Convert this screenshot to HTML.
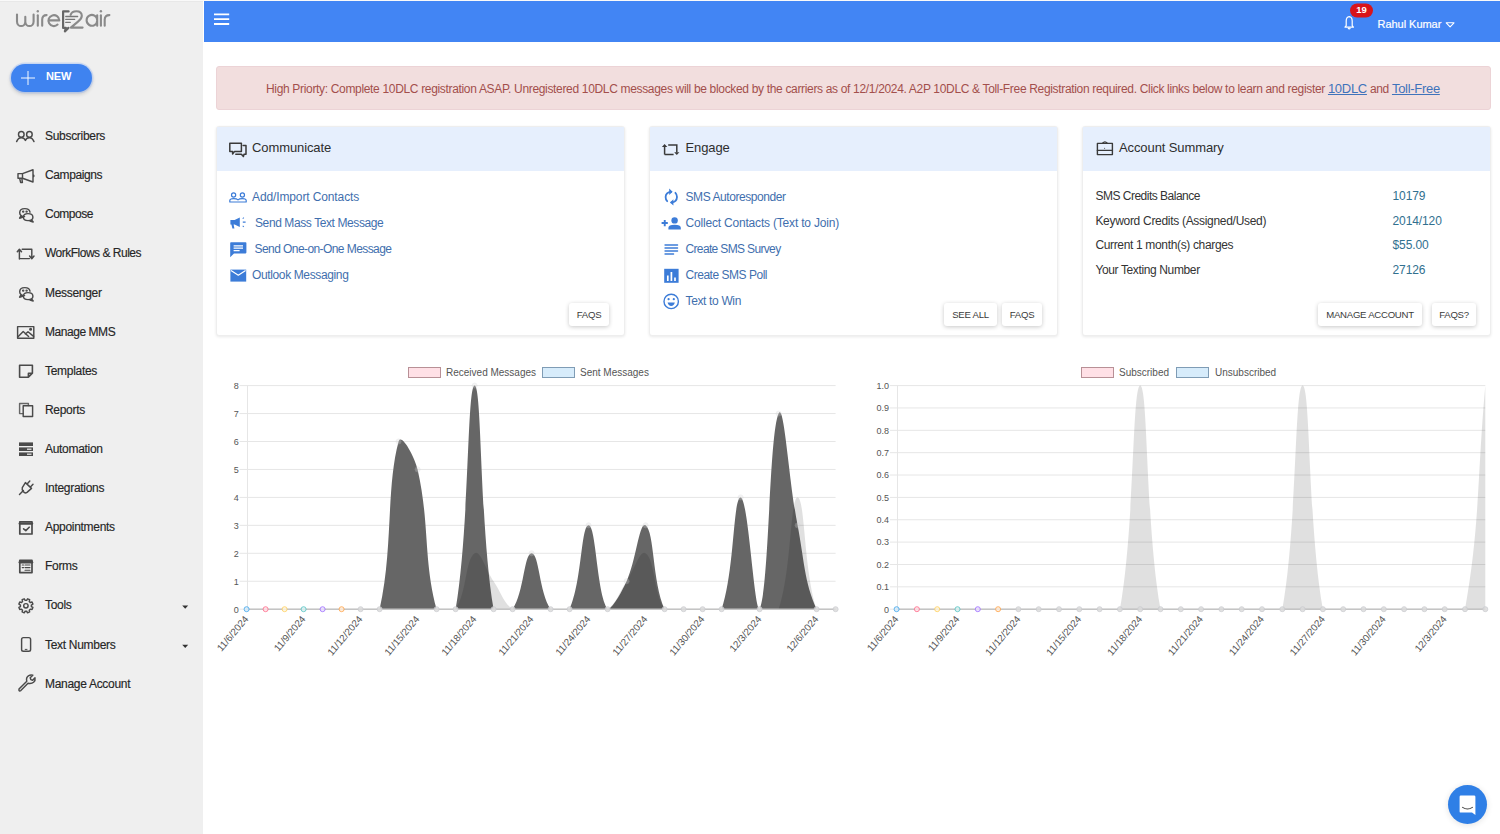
<!DOCTYPE html>
<html><head><meta charset="utf-8">
<style>
*{box-sizing:border-box;margin:0;padding:0}
html,body{width:1500px;height:834px;overflow:hidden;background:#fff;font-family:"Liberation Sans",sans-serif;position:relative}
.abs{position:absolute}
#side{left:0;top:0;width:203px;height:834px;background:#efefef}
#hdr{left:204px;top:1px;width:1296px;height:41px;background:#4285f4}
.nav{position:absolute;left:45px;font-size:12px;color:#262626;-webkit-text-stroke:0.15px #262626;letter-spacing:-0.3px;line-height:14px;white-space:nowrap}
.ico{position:absolute;overflow:visible}
#newbtn{left:11px;top:64px;width:81px;height:28px;border-radius:14px;background:#3f83f0;box-shadow:0 0 0 1.5px rgba(140,180,255,.35),0 2px 4px rgba(0,0,0,.18)}
#newbtn span{position:absolute;left:35px;top:5px;font-size:11px;font-weight:bold;color:#fff;line-height:14px;letter-spacing:-0.2px}
#alert{left:216px;top:66px;width:1275px;height:44px;background:#f2dede;border:1px solid #ecd3d6;border-radius:3px}
#alert .t{position:absolute;left:49px;top:15px;font-size:12px;color:#a34f4c;line-height:14px;white-space:nowrap;letter-spacing:-0.33px}
#alert a{color:#3f73bb;text-decoration:underline;font-size:13px;letter-spacing:-0.3px}
.card{position:absolute;top:126px;height:210px;background:#fff;border:1px solid #eeeeee;border-radius:3px;box-shadow:0 1px 3px rgba(0,0,0,.09)}
.chd{position:absolute;left:0;top:0;right:0;height:44px;background:#e6effd}
.ctitle{position:absolute;top:14px;font-size:13px;color:#2e2e2e;line-height:16px;white-space:nowrap;letter-spacing:-0.1px}
.lnk{position:absolute;font-size:12px;color:#3f6fae;line-height:14px;white-space:nowrap;letter-spacing:-0.12px}
.row{position:absolute;font-size:12px;color:#333;line-height:14px;white-space:nowrap;letter-spacing:-0.2px}
.val{position:absolute;font-size:12px;color:#31708f;line-height:14px;white-space:nowrap;letter-spacing:-0.1px}
.btn{position:absolute;height:23px;top:176px;background:#fff;border-radius:3px;box-shadow:0 1px 4px rgba(0,0,0,.22);font-size:9.6px;color:#3a3a3a;text-align:center;line-height:23px;white-space:nowrap;letter-spacing:-0.25px}
.leg{position:absolute;font-size:10px;color:#555;line-height:12px;white-space:nowrap}
.lbox{position:absolute;width:33px;height:11px;border:1px solid}
</style></head><body>
<div id="side" class="abs"></div>
<svg class="abs" style="left:0;top:0" width="203" height="40" viewBox="0 0 203 40" fill="none" stroke-linecap="round" stroke-linejoin="round">
<g stroke="#8a8a8a" stroke-width="2.1">
<path d="M17,14.6 V21.4 A4.1,4.6 0 0 0 25.3,21.4 V16.8 M25.3,21.4 A4.1,4.6 0 0 0 33.6,21.4 V14.6"/>
<path d="M37.8,15.2 V25.8"/>
<path d="M42.2,25.8 V19.6 Q42.2,15.1 46.6,15.1"/>
<path d="M48.6,20.4 H59.3 A5.45,5.45 0 1 0 57.6,24.6"/>
<path d="M70.6,14.8 Q71.8,11.2 76.4,11.2 Q81.8,11.2 81.8,15.8 Q81.8,18.8 78,21.6 L70.8,27.6 H82.6"/>
<path d="M97.2,20.4 A5.3,5.4 0 1 1 97.2,20.3 M97.2,15.2 V25.8"/>
<path d="M100.9,15.2 V25.8"/>
<path d="M104.7,25.8 V19.6 Q104.7,15.1 109.4,15.1"/>
</g>
<g fill="#8e8e8e"><circle cx="37.8" cy="11.3" r="1.2"/><circle cx="100.9" cy="11.3" r="1.2"/></g>
<path d="M68.6,11.4 H63.1 V27.9 H65.9 L64.9,31.4 L68.4,27.9" stroke="#666" stroke-width="2.2"/>
<path d="M65.8,16.5 H77.6 M65.8,19.4 H74.6 M65.8,22.4 H70.2" stroke="#777" stroke-width="1.4"/>
</svg>
<div id="newbtn" class="abs"><svg class="abs" style="left:10px;top:7px" width="14" height="14" viewBox="0 0 14 14"><path d="M7,0 V14 M0,7 H14" stroke="#fff" stroke-width="0.95"/></svg><span>NEW</span></div>
<svg class="abs" style="left:0;top:0" width="203" height="720" viewBox="0 0 203 720" fill="none" stroke="#4a4a4a" stroke-width="1.45" stroke-linecap="round" stroke-linejoin="round">
<!-- Subscribers -->
<circle cx="21.3" cy="134.4" r="2.8"/><circle cx="29.4" cy="134.4" r="2.8"/>
<path d="M16.6,141.6 Q18.2,137.8 21.3,137.8 Q24.2,137.8 25.4,140.4 Q26.5,137.8 29.4,137.8 Q32.4,137.8 34,141.6"/>
<!-- Campaigns megaphone -->
<path d="M18,173.6 H22.5 L33,169.8 V182 L22.5,178.2 H18 Z M22.5,173.6 V178.2 M19.6,178.2 L20.6,182.4 H22.4 L21.8,178.2 M33.2,174.8 Q34.6,175.9 33.2,177"/>
<!-- Compose -->
<path d="M24.6,216.6 Q19.9,216.6 19.7,212.8 Q19.7,208.6 24.8,208.6 Q29.6,208.6 30,212.2 M21,215.8 L19.6,218.2 L23.2,217"/>
<path d="M28,213.6 Q32.9,213.6 32.9,217.2 Q32.9,220.6 28,220.6 Q23.4,220.6 23.4,217.2 Q23.4,213.6 28,213.6 M31.6,220 L33.2,222 L30,221"/>
<circle cx="23.2" cy="211.6" r="0.5" fill="#4a4a4a"/><circle cx="26.6" cy="211.6" r="0.5" fill="#4a4a4a"/>
<!-- WorkFlows -->
<path d="M19.4,259 V249.8 M17.3,251.8 L19.4,249.2 L21.5,251.8 M19.4,258.6 H29.4 M22.2,249.3 H31.8 V258.2 M29.6,256 L31.8,258.8 L34,256"/>
<!-- Messenger -->
<path d="M24.6,295.6 Q19.9,295.6 19.7,291.8 Q19.7,287.6 24.8,287.6 Q29.6,287.6 30,291.2 M21,294.8 L19.6,297.2 L23.2,296"/>
<path d="M28,292.6 Q32.9,292.6 32.9,296.2 Q32.9,299.6 28,299.6 Q23.4,299.6 23.4,296.2 Q23.4,292.6 28,292.6 M31.6,299 L33.2,301 L30,300"/>
<circle cx="23.2" cy="290.6" r="0.5" fill="#4a4a4a"/><circle cx="26.6" cy="290.6" r="0.5" fill="#4a4a4a"/>
<!-- Manage MMS -->
<rect x="17.6" y="326.6" width="16.2" height="11.6"/>
<path d="M18,336.8 L23.2,331.4 L28.6,336.6 M25.4,334 L28,331.8 L33.6,336.4"/><circle cx="30.6" cy="329.2" r="0.8" fill="#4a4a4a"/>
<!-- Templates -->
<path d="M19.6,365.2 H32.4 V373.2 L28.4,377.2 H19.6 Z M28.4,377.2 V373.4 H32.2" stroke-width="1.6"/>
<!-- Reports -->
<path d="M23.2,413.6 H19.6 V403.4 H28.4 V405.6" stroke="#666"/>
<rect x="23.2" y="405.8" width="9.4" height="10.6"/>
<!-- Automation -->
<g fill="#4a4a4a" stroke="none"><rect x="19" y="442.4" width="14" height="3.6"/><rect x="19" y="447.4" width="14" height="3.6"/><rect x="19" y="452.4" width="14" height="3.6"/></g>
<g fill="#efefef" stroke="none"><rect x="27" y="448.6" width="4.5" height="1.2"/><rect x="27" y="453.6" width="4.5" height="1.2"/></g>
<!-- Integrations plug -->
<path d="M19.5,494.4 L23.4,490.6 M22.3,487.6 L25.4,482.6 L31.5,488.4 L27,492.4 Q25,493.6 23.4,491.8 Q21.6,489.8 22.3,487.6 Z M27.1,484 L29.8,481.1 M30.4,486.9 L33,484.2"/>
<!-- Appointments -->
<rect x="19.8" y="521.8" width="12.2" height="12.2" stroke-width="1.7"/>
<path d="M19.8,523.6 H32" stroke-width="2.4"/>
<path d="M23.6,528.8 L25.8,530.6 L29.2,527.2" stroke-width="1.6"/>
<!-- Forms -->
<rect x="19.8" y="560.4" width="12.2" height="12.2" stroke-width="1.7"/>
<path d="M19.8,562.2 H32" stroke-width="2.4"/>
<path d="M22.2,565 H23.6 M25,565 H30 M22.2,567.6 H23.6 M25,567.6 H30 M25,570.2 H30" stroke-width="1.1"/>
<!-- Tools gear -->
<path d="M31.35,606.52 L32.90,607.48 L32.04,609.56 L30.26,609.15 L29.25,610.16 L29.66,611.94 L27.58,612.80 L26.62,611.25 L25.18,611.25 L24.22,612.80 L22.14,611.94 L22.55,610.16 L21.54,609.15 L19.76,609.56 L18.90,607.48 L20.45,606.52 L20.45,605.08 L18.90,604.12 L19.76,602.04 L21.54,602.45 L22.55,601.44 L22.14,599.66 L24.22,598.80 L25.18,600.35 L26.62,600.35 L27.58,598.80 L29.66,599.66 L29.25,601.44 L30.26,602.45 L32.04,602.04 L32.90,604.12 L31.35,605.08 Z"/>
<circle cx="25.9" cy="605.8" r="2.2"/>
<!-- Text Numbers phone -->
<rect x="21.6" y="637.6" width="9" height="13.6" rx="1.8"/>
<path d="M25.2,649.4 H27" stroke-width="1"/>
<!-- Manage Account wrench -->
<path d="M19,689 L26.8,681.2 Q25.8,677.6 28.4,675.8 Q30.6,674.4 32.8,675.2 L30.2,677.8 L30.8,679.6 L32.6,680.2 L35,677.8 Q35.6,680.4 33.6,682.2 Q31.4,684 28,683.2 L20.8,690.6 Q19.6,691.4 19,690.4 Z"/>
<!-- carets -->
<path d="M182.2,605.6 H188.2 L185.2,608.8 Z M182.2,644.8 H188.2 L185.2,648 Z" fill="#333" stroke="none"/>
</svg>
<div class="nav" style="top:129px">Subscribers</div>
<div class="nav" style="top:168px;letter-spacing:-0.4px">Campaigns</div>
<div class="nav" style="top:207px;letter-spacing:-0.5px">Compose</div>
<div class="nav" style="top:246px;letter-spacing:-0.5px">WorkFlows &amp; Rules</div>
<div class="nav" style="top:286px">Messenger</div>
<div class="nav" style="top:325px;letter-spacing:-0.45px">Manage MMS</div>
<div class="nav" style="top:364px">Templates</div>
<div class="nav" style="top:403px">Reports</div>
<div class="nav" style="top:442px">Automation</div>
<div class="nav" style="top:481px">Integrations</div>
<div class="nav" style="top:520px">Appointments</div>
<div class="nav" style="top:559px">Forms</div>
<div class="nav" style="top:598px">Tools</div>
<div class="nav" style="top:638px">Text Numbers</div>
<div class="nav" style="top:677px">Manage Account</div>
<div id="hdr" class="abs"></div>
<div class="abs" style="left:0;top:0;width:1500px;height:1px;background:#f9f9f9"></div><div class="abs" style="left:0;top:1px;width:203px;height:1px;background:#e8e8e8"></div>
<svg class="abs" style="left:204px;top:0" width="1296" height="42" viewBox="204 0 1296 42">
<path d="M214,14.4 H229.2 M214,19.2 H229.2 M214,24 H229.2" stroke="#fff" stroke-width="1.8"/>
<path d="M1345,27.2 H1353.4 L1352.2,25.6 V21 Q1352.2,17 1349.2,16.6 Q1346.2,17 1346.2,21 V25.6 Z M1348,28.2 Q1349.2,29.6 1350.4,28.2" fill="none" stroke="#fff" stroke-width="1.2" stroke-linejoin="round"/>
<rect x="1350" y="3.4" width="23" height="14.2" rx="7.1" fill="#d8141b"/>
<text x="1361.5" y="13.4" text-anchor="middle" font-family="Liberation Sans" font-weight="bold" font-size="9.5" fill="#fff">19</text>
<text x="1377.6" y="28" font-family="Liberation Sans" font-size="11" fill="#fff" stroke="#fff" stroke-width="0.2" letter-spacing="-0.05">Rahul Kumar</text>
<path d="M1446.2,22.8 H1454 L1450.1,26.8 Z" fill="none" stroke="#fff" stroke-width="1.1" stroke-linejoin="round"/>
</svg>
<div id="alert" class="abs"><div class="t">High Priorty: Complete 10DLC registration ASAP. Unregistered 10DLC messages will be blocked by the carriers as of 12/1/2024. A2P 10DLC &amp; Toll-Free Registration required. Click links below to learn and register <a>10DLC</a> and <a>Toll-Free</a></div></div>
<div class="card" style="left:216px;width:409px"><div class="chd"></div></div>
<div class="card" style="left:649px;width:409px"><div class="chd"></div></div>
<div class="card" style="left:1082px;width:409px"><div class="chd"></div></div>
<div class="ctitle" style="left:252px;top:140px">Communicate</div>
<div class="ctitle" style="left:685.5px;top:140px">Engage</div>
<div class="ctitle" style="left:1119px;top:140px">Account Summary</div>
<div class="lnk" style="left:252px;top:190px">Add/Import Contacts</div>
<div class="lnk" style="left:255px;top:216px;letter-spacing:-0.4px">Send Mass Text Message</div>
<div class="lnk" style="left:254.6px;top:242px;letter-spacing:-0.58px">Send One-on-One Message</div>
<div class="lnk" style="left:252px;top:268px;letter-spacing:-0.37px">Outlook Messaging</div>
<div class="lnk" style="left:685.5px;top:190px;letter-spacing:-0.43px">SMS Autoresponder</div>
<div class="lnk" style="left:685.5px;top:216px;letter-spacing:-0.19px">Collect Contacts (Text to Join)</div>
<div class="lnk" style="left:685.5px;top:242px;letter-spacing:-0.65px">Create SMS Survey</div>
<div class="lnk" style="left:685.5px;top:268px;letter-spacing:-0.48px">Create SMS Poll</div>
<div class="lnk" style="left:685.5px;top:294px;letter-spacing:-0.35px">Text to Win</div>
<div class="row" style="left:1095.4px;top:189px;letter-spacing:-0.5px">SMS Credits Balance</div>
<div class="row" style="left:1095.4px;top:213.5px;letter-spacing:-0.3px">Keyword Credits (Assigned/Used)</div>
<div class="row" style="left:1095.4px;top:238px;letter-spacing:-0.34px">Current 1 month(s) charges</div>
<div class="row" style="left:1095.4px;top:262.5px;letter-spacing:-0.37px">Your Texting Number</div>
<div class="val" style="left:1392.5px;top:189px">10179</div>
<div class="val" style="left:1392.5px;top:213.5px">2014/120</div>
<div class="val" style="left:1392.5px;top:238px">$55.00</div>
<div class="val" style="left:1392.5px;top:262.5px">27126</div>
<div class="btn" style="left:569px;top:303px;width:40px">FAQS</div>
<div class="btn" style="left:944px;top:303px;width:53px">SEE ALL</div>
<div class="btn" style="left:1002px;top:303px;width:40px">FAQS</div>
<div class="btn" style="left:1318px;top:303px;width:104px">MANAGE ACCOUNT</div>
<div class="btn" style="left:1432px;top:303px;width:44px">FAQS?</div>
<svg class="abs" style="left:0;top:0" width="1500" height="340" viewBox="0 0 1500 340" fill="none" stroke-linecap="round" stroke-linejoin="round">
<g stroke="#3a3a3a" stroke-width="1.3">
<!-- forum outline -->
<path d="M229.8,143.2 H241.4 V151.4 H234.6 L232.6,154 V151.4 H229.8 Z M243.2,145.4 H246 V154.2 H244 L243.4,156.6 L241.4,154.2 H235.8" stroke-width="1.5"/>
<!-- engage icon -->
<path d="M664.6,154.4 V146.6 M664.6,154.4 H673.6 M668.2,145 H676.8 V152.6" stroke-width="1.5" stroke-linecap="butt" stroke-linejoin="miter"/><path d="M661.9,146.9 L664.6,143.9 L667.3,146.9 Z M674.2,152.3 L676.8,155 L679.4,152.3 Z" fill="#3a3a3a" stroke="none"/>
<!-- briefcase -->
<rect x="1097.4" y="143.4" width="15" height="11.2" stroke-width="1.4"/>
<path d="M1102.6,143.2 Q1104.9,140.6 1107.2,143.2 M1097.4,150.4 H1112.4" stroke-width="1.4"/><circle cx="1104.6" cy="148.2" r="0.5" fill="#3a3a3a" stroke="none"/>
</g>
<g fill="#3c7cd8" stroke="none">
<!-- megaphone filled -->
<path d="M230.4,220 H234.6 L239.8,217.4 V227 L234.6,224.4 H233.6 L234.4,228.4 H232.4 L231.4,224.4 H230.4 Z"/>
<path d="M242.4,218.2 L243.6,217.2 L244.2,218 L243,219 Z M242.8,221.6 H245.6 V222.8 H242.8 Z M242.4,226.2 L243,225.4 L244.2,226.4 L243.6,227.2 Z"/>
<!-- chat filled -->
<path d="M231,242.2 H245.6 Q246.4,242.2 246.4,243 V252.6 Q246.4,253.4 245.6,253.4 H234 L230.2,257.2 V243 Q230.2,242.2 231,242.2 Z"/>
<!-- mail -->
<path d="M230.4,269.6 H246.2 V281.6 H230.4 Z"/>
<!-- person add -->
<circle cx="674.6" cy="220.4" r="3.2"/>
<path d="M668.4,229.4 V227.8 Q668.4,224.8 674.6,224.8 Q680.8,224.8 680.8,227.8 V229.4 Z"/>
<path d="M661.6,222.1 H667.8 V224 H661.6 Z M663.8,219.9 H665.7 V226.2 H663.8 Z"/>
<!-- poll -->
<rect x="664.2" y="268.8" width="14.4" height="14"/>
</g>
<g stroke="#fff" stroke-width="1.2" stroke-linecap="butt">
<path d="M233.6,245.8 H243 M233.6,248.2 H243 M233.6,250.6 H239.6"/>
<path d="M231,270.4 L238.3,275.2 L245.6,270.4"/>
<path d="M667.8,281 V275.6 M671.4,281 V272 M675,281 V277.6" stroke-width="1.7"/>
</g>
<g stroke="#3c7cd8" stroke-width="1.4" fill="none">
<!-- add contacts outline -->
<circle cx="233.6" cy="195" r="2.1" stroke-width="1.2"/><circle cx="242.4" cy="195" r="2.1" stroke-width="1.2"/>
<path d="M229.8,202 V200.6 Q229.8,198.6 233.6,198.6 Q236.8,198.6 238,199.8 Q239.2,198.6 242.4,198.6 Q246.2,198.6 246.2,200.6 V202 Z" stroke-width="1.2"/>
<!-- autorenew -->
<path d="M671.2,191.8 Q665.8,192 665.6,197 Q665.6,199.6 667.2,201.2 M671.4,202.4 Q676.8,202 677,197 Q677,194.4 675.4,192.8" stroke-width="1.8"/>
<path d="M669.2,188.6 L672.6,191.8 L669.2,195 Z M673.4,199.2 L670,202.4 L673.4,205.6 Z" fill="#3c7cd8" stroke="none"/>
<!-- survey lines -->
<path d="M665,245 H677.6 M665,248 H677.6 M665,251 H677.6 M665,254 H673.6" stroke-width="1.3"/>
<!-- smiley -->
<circle cx="671.2" cy="301.4" r="7.2"/>
</g>
<g fill="#3c7cd8">
<circle cx="668.6" cy="299.2" r="1.1"/><circle cx="673.8" cy="299.2" r="1.1"/>
<path d="M667.6,302.6 H674.8 Q674,306 671.2,306 Q668.4,306 667.6,302.6 Z"/>
</g>
</svg>
<div class="lbox" style="left:408px;top:367px;background:#ffe0e6;border-color:#b89096"></div>
<div class="leg" style="left:446px;top:367px">Received Messages</div>
<div class="lbox" style="left:542px;top:367px;background:#d7ecfb;border-color:#7f9cb5"></div>
<div class="leg" style="left:580px;top:367px">Sent Messages</div>
<div class="lbox" style="left:1081px;top:367px;background:#ffe0e6;border-color:#b89096"></div>
<div class="leg" style="left:1119px;top:367px">Subscribed</div>
<div class="lbox" style="left:1176px;top:367px;background:#d7ecfb;border-color:#7f9cb5"></div>
<div class="leg" style="left:1215px;top:367px">Unsubscribed</div>
<svg class="abs" style="left:0;top:0" width="1500" height="700" viewBox="0 0 1500 700" font-family="Liberation Sans">
<line x1="239.5" y1="609.20" x2="835.60" y2="609.20" stroke="#e6e6e6" stroke-width="1"/>
<line x1="239.5" y1="581.25" x2="835.60" y2="581.25" stroke="#e6e6e6" stroke-width="1"/>
<line x1="239.5" y1="553.30" x2="835.60" y2="553.30" stroke="#e6e6e6" stroke-width="1"/>
<line x1="239.5" y1="525.35" x2="835.60" y2="525.35" stroke="#e6e6e6" stroke-width="1"/>
<line x1="239.5" y1="497.40" x2="835.60" y2="497.40" stroke="#e6e6e6" stroke-width="1"/>
<line x1="239.5" y1="469.45" x2="835.60" y2="469.45" stroke="#e6e6e6" stroke-width="1"/>
<line x1="239.5" y1="441.50" x2="835.60" y2="441.50" stroke="#e6e6e6" stroke-width="1"/>
<line x1="239.5" y1="413.55" x2="835.60" y2="413.55" stroke="#e6e6e6" stroke-width="1"/>
<line x1="239.5" y1="385.60" x2="835.60" y2="385.60" stroke="#e6e6e6" stroke-width="1"/>
<line x1="247.50" y1="385.60" x2="247.50" y2="609.20" stroke="#e6e6e6" stroke-width="1"/>
<text x="238.8" y="612.50" text-anchor="end" font-size="9" fill="#555">0</text>
<text x="238.8" y="584.55" text-anchor="end" font-size="9" fill="#555">1</text>
<text x="238.8" y="556.60" text-anchor="end" font-size="9" fill="#555">2</text>
<text x="238.8" y="528.65" text-anchor="end" font-size="9" fill="#555">3</text>
<text x="238.8" y="500.70" text-anchor="end" font-size="9" fill="#555">4</text>
<text x="238.8" y="472.75" text-anchor="end" font-size="9" fill="#555">5</text>
<text x="238.8" y="444.80" text-anchor="end" font-size="9" fill="#555">6</text>
<text x="238.8" y="416.85" text-anchor="end" font-size="9" fill="#555">7</text>
<text x="238.8" y="388.90" text-anchor="end" font-size="9" fill="#555">8</text>
<path d="M246.60,609.20 C254.20,609.20 258.00,609.20 265.60,609.20 C273.20,609.20 277.00,609.20 284.60,609.20 C292.20,609.20 296.00,609.20 303.60,609.20 C311.20,609.20 315.00,609.20 322.60,609.20 C330.20,609.20 334.00,609.20 341.60,609.20 C349.20,609.20 353.00,609.20 360.60,609.20 C368.20,609.20 378.06,609.20 379.60,609.20 C393.26,548.91 385.94,488.07 398.60,441.50 C401.14,432.17 414.66,456.48 417.60,469.45 C429.86,523.56 423.20,559.94 436.60,609.20 C438.40,609.20 454.41,609.20 455.60,609.20 C469.61,526.74 467.00,385.60 474.60,385.60 C482.20,385.60 479.59,526.74 493.60,609.20 C494.79,609.20 508.90,609.20 512.60,609.20 C524.10,592.28 524.00,553.30 531.60,553.30 C539.20,553.30 539.10,592.28 550.60,609.20 C554.30,609.20 566.85,609.20 569.60,609.20 C582.05,581.73 581.00,525.35 588.60,525.35 C596.20,525.35 596.69,593.15 607.60,609.20 C611.89,609.20 621.07,593.46 626.60,581.25 C636.27,559.92 639.41,520.80 645.60,525.35 C654.61,531.98 652.15,581.73 664.60,609.20 C667.35,609.20 676.00,609.20 683.60,609.20 C691.20,609.20 695.00,609.20 702.60,609.20 C710.20,609.20 719.42,609.20 721.60,609.20 C734.62,570.90 733.00,497.40 740.60,497.40 C748.20,497.40 754.04,609.20 759.60,609.20 C769.24,587.93 768.96,434.82 778.60,413.55 C784.16,401.28 788.95,480.84 797.60,525.35 C804.15,559.10 804.15,581.73 816.60,609.20 C819.35,609.20 828.00,609.20 835.60,609.20 L835.60,609.20 L246.60,609.20 Z" fill="#666666"/>
<path d="M246.60,609.20 C254.20,609.20 258.00,609.20 265.60,609.20 C273.20,609.20 277.00,609.20 284.60,609.20 C292.20,609.20 296.00,609.20 303.60,609.20 C311.20,609.20 315.00,609.20 322.60,609.20 C330.20,609.20 334.00,609.20 341.60,609.20 C349.20,609.20 353.00,609.20 360.60,609.20 C368.20,609.20 372.00,609.20 379.60,609.20 C387.20,609.20 391.00,609.20 398.60,609.20 C406.20,609.20 410.00,609.20 417.60,609.20 C425.20,609.20 429.00,609.20 436.60,609.20 C444.20,609.20 451.90,609.20 455.60,609.20 C467.10,592.28 464.93,560.41 474.60,553.30 C480.13,549.23 486.00,570.07 493.60,581.25 C501.20,592.43 502.87,602.04 512.60,609.20 C518.07,609.20 524.00,609.20 531.60,609.20 C539.20,609.20 543.00,609.20 550.60,609.20 C558.20,609.20 562.00,609.20 569.60,609.20 C577.20,609.20 581.00,609.20 588.60,609.20 C596.20,609.20 602.13,609.20 607.60,609.20 C617.33,602.04 619.00,592.43 626.60,581.25 C634.20,570.07 640.07,549.23 645.60,553.30 C655.27,560.41 653.10,592.28 664.60,609.20 C668.30,609.20 676.00,609.20 683.60,609.20 C691.20,609.20 695.00,609.20 702.60,609.20 C710.20,609.20 714.00,609.20 721.60,609.20 C729.20,609.20 733.00,609.20 740.60,609.20 C748.20,609.20 752.00,609.20 759.60,609.20 C767.20,609.20 776.42,609.20 778.60,609.20 C791.62,570.90 790.00,497.40 797.60,497.40 C805.20,497.40 803.58,570.90 816.60,609.20 C818.78,609.20 828.00,609.20 835.60,609.20 L835.60,609.20 L246.60,609.20 Z" fill="rgba(0,0,0,0.12)"/>
<line x1="246.60" y1="609.20" x2="835.60" y2="609.20" stroke="#c4c4c4" stroke-width="1.6"/>
<circle cx="246.60" cy="609.20" r="2.5" fill="#d7ecfb" stroke="#36a2eb" stroke-width="0.9" opacity="0.85"/>
<circle cx="265.60" cy="609.20" r="2.5" fill="#ffe0e6" stroke="#ff6384" stroke-width="0.9" opacity="0.85"/>
<circle cx="284.60" cy="609.20" r="2.5" fill="#fff5dd" stroke="#ffce56" stroke-width="0.9" opacity="0.85"/>
<circle cx="303.60" cy="609.20" r="2.5" fill="#dbf2f2" stroke="#4bc0c0" stroke-width="0.9" opacity="0.85"/>
<circle cx="322.60" cy="609.20" r="2.5" fill="#ebe0ff" stroke="#9966ff" stroke-width="0.9" opacity="0.85"/>
<circle cx="341.60" cy="609.20" r="2.5" fill="#ffecd9" stroke="#ff9f40" stroke-width="0.9" opacity="0.85"/>
<circle cx="360.60" cy="609.20" r="2.5" fill="#dcdcdc" stroke="#c9cbcf" stroke-width="0.9" opacity="0.85"/>
<circle cx="379.60" cy="609.20" r="2.5" fill="#dcdcdc" stroke="#c9cbcf" stroke-width="0.9" opacity="0.85"/>
<circle cx="398.60" cy="441.50" r="2.5" fill="#dcdcdc" stroke="#c9cbcf" stroke-width="0.9" opacity="0.30"/>
<circle cx="417.60" cy="469.45" r="2.5" fill="#dcdcdc" stroke="#c9cbcf" stroke-width="0.9" opacity="0.30"/>
<circle cx="436.60" cy="609.20" r="2.5" fill="#dcdcdc" stroke="#c9cbcf" stroke-width="0.9" opacity="0.85"/>
<circle cx="455.60" cy="609.20" r="2.5" fill="#dcdcdc" stroke="#c9cbcf" stroke-width="0.9" opacity="0.85"/>
<circle cx="474.60" cy="385.60" r="2.5" fill="#dcdcdc" stroke="#c9cbcf" stroke-width="0.9" opacity="0.30"/>
<circle cx="493.60" cy="609.20" r="2.5" fill="#dcdcdc" stroke="#c9cbcf" stroke-width="0.9" opacity="0.85"/>
<circle cx="512.60" cy="609.20" r="2.5" fill="#dcdcdc" stroke="#c9cbcf" stroke-width="0.9" opacity="0.85"/>
<circle cx="531.60" cy="553.30" r="2.5" fill="#dcdcdc" stroke="#c9cbcf" stroke-width="0.9" opacity="0.30"/>
<circle cx="550.60" cy="609.20" r="2.5" fill="#dcdcdc" stroke="#c9cbcf" stroke-width="0.9" opacity="0.85"/>
<circle cx="569.60" cy="609.20" r="2.5" fill="#dcdcdc" stroke="#c9cbcf" stroke-width="0.9" opacity="0.85"/>
<circle cx="588.60" cy="525.35" r="2.5" fill="#dcdcdc" stroke="#c9cbcf" stroke-width="0.9" opacity="0.30"/>
<circle cx="607.60" cy="609.20" r="2.5" fill="#dcdcdc" stroke="#c9cbcf" stroke-width="0.9" opacity="0.85"/>
<circle cx="626.60" cy="581.25" r="2.5" fill="#dcdcdc" stroke="#c9cbcf" stroke-width="0.9" opacity="0.30"/>
<circle cx="645.60" cy="525.35" r="2.5" fill="#dcdcdc" stroke="#c9cbcf" stroke-width="0.9" opacity="0.30"/>
<circle cx="664.60" cy="609.20" r="2.5" fill="#dcdcdc" stroke="#c9cbcf" stroke-width="0.9" opacity="0.85"/>
<circle cx="683.60" cy="609.20" r="2.5" fill="#dcdcdc" stroke="#c9cbcf" stroke-width="0.9" opacity="0.85"/>
<circle cx="702.60" cy="609.20" r="2.5" fill="#dcdcdc" stroke="#c9cbcf" stroke-width="0.9" opacity="0.85"/>
<circle cx="721.60" cy="609.20" r="2.5" fill="#dcdcdc" stroke="#c9cbcf" stroke-width="0.9" opacity="0.85"/>
<circle cx="740.60" cy="497.40" r="2.5" fill="#dcdcdc" stroke="#c9cbcf" stroke-width="0.9" opacity="0.30"/>
<circle cx="759.60" cy="609.20" r="2.5" fill="#dcdcdc" stroke="#c9cbcf" stroke-width="0.9" opacity="0.85"/>
<circle cx="778.60" cy="413.55" r="2.5" fill="#dcdcdc" stroke="#c9cbcf" stroke-width="0.9" opacity="0.30"/>
<circle cx="797.60" cy="525.35" r="2.5" fill="#dcdcdc" stroke="#c9cbcf" stroke-width="0.9" opacity="0.30"/>
<circle cx="816.60" cy="609.20" r="2.5" fill="#dcdcdc" stroke="#c9cbcf" stroke-width="0.9" opacity="0.85"/>
<circle cx="835.60" cy="609.20" r="2.5" fill="#dcdcdc" stroke="#c9cbcf" stroke-width="0.9" opacity="0.85"/>
<text transform="translate(249.10,619.20) rotate(-50)" text-anchor="end" font-size="9.8" fill="#555">11/6/2024</text>
<text transform="translate(306.10,619.20) rotate(-50)" text-anchor="end" font-size="9.8" fill="#555">11/9/2024</text>
<text transform="translate(363.10,619.20) rotate(-50)" text-anchor="end" font-size="9.8" fill="#555">11/12/2024</text>
<text transform="translate(420.10,619.20) rotate(-50)" text-anchor="end" font-size="9.8" fill="#555">11/15/2024</text>
<text transform="translate(477.10,619.20) rotate(-50)" text-anchor="end" font-size="9.8" fill="#555">11/18/2024</text>
<text transform="translate(534.10,619.20) rotate(-50)" text-anchor="end" font-size="9.8" fill="#555">11/21/2024</text>
<text transform="translate(591.10,619.20) rotate(-50)" text-anchor="end" font-size="9.8" fill="#555">11/24/2024</text>
<text transform="translate(648.10,619.20) rotate(-50)" text-anchor="end" font-size="9.8" fill="#555">11/27/2024</text>
<text transform="translate(705.10,619.20) rotate(-50)" text-anchor="end" font-size="9.8" fill="#555">11/30/2024</text>
<text transform="translate(762.10,619.20) rotate(-50)" text-anchor="end" font-size="9.8" fill="#555">12/3/2024</text>
<text transform="translate(819.10,619.20) rotate(-50)" text-anchor="end" font-size="9.8" fill="#555">12/6/2024</text>
<line x1="890" y1="609.20" x2="1485.30" y2="609.20" stroke="#e6e6e6" stroke-width="1"/>
<line x1="890" y1="586.84" x2="1485.30" y2="586.84" stroke="#e6e6e6" stroke-width="1"/>
<line x1="890" y1="564.48" x2="1485.30" y2="564.48" stroke="#e6e6e6" stroke-width="1"/>
<line x1="890" y1="542.12" x2="1485.30" y2="542.12" stroke="#e6e6e6" stroke-width="1"/>
<line x1="890" y1="519.76" x2="1485.30" y2="519.76" stroke="#e6e6e6" stroke-width="1"/>
<line x1="890" y1="497.40" x2="1485.30" y2="497.40" stroke="#e6e6e6" stroke-width="1"/>
<line x1="890" y1="475.04" x2="1485.30" y2="475.04" stroke="#e6e6e6" stroke-width="1"/>
<line x1="890" y1="452.68" x2="1485.30" y2="452.68" stroke="#e6e6e6" stroke-width="1"/>
<line x1="890" y1="430.32" x2="1485.30" y2="430.32" stroke="#e6e6e6" stroke-width="1"/>
<line x1="890" y1="407.96" x2="1485.30" y2="407.96" stroke="#e6e6e6" stroke-width="1"/>
<line x1="890" y1="385.60" x2="1485.30" y2="385.60" stroke="#e6e6e6" stroke-width="1"/>
<line x1="897.50" y1="385.60" x2="897.50" y2="609.20" stroke="#e6e6e6" stroke-width="1"/>
<text x="889" y="612.50" text-anchor="end" font-size="9" fill="#555">0</text>
<text x="889" y="590.14" text-anchor="end" font-size="9" fill="#555">0.1</text>
<text x="889" y="567.78" text-anchor="end" font-size="9" fill="#555">0.2</text>
<text x="889" y="545.42" text-anchor="end" font-size="9" fill="#555">0.3</text>
<text x="889" y="523.06" text-anchor="end" font-size="9" fill="#555">0.4</text>
<text x="889" y="500.70" text-anchor="end" font-size="9" fill="#555">0.5</text>
<text x="889" y="478.34" text-anchor="end" font-size="9" fill="#555">0.6</text>
<text x="889" y="455.98" text-anchor="end" font-size="9" fill="#555">0.7</text>
<text x="889" y="433.62" text-anchor="end" font-size="9" fill="#555">0.8</text>
<text x="889" y="411.26" text-anchor="end" font-size="9" fill="#555">0.9</text>
<text x="889" y="388.90" text-anchor="end" font-size="9" fill="#555">1.0</text>
<path d="M896.60,609.20 C904.72,609.20 908.78,609.20 916.90,609.20 C925.02,609.20 929.08,609.20 937.20,609.20 C945.32,609.20 949.38,609.20 957.50,609.20 C965.62,609.20 969.68,609.20 977.80,609.20 C985.92,609.20 989.98,609.20 998.10,609.20 C1006.22,609.20 1010.28,609.20 1018.40,609.20 C1026.52,609.20 1030.58,609.20 1038.70,609.20 C1046.82,609.20 1050.88,609.20 1059.00,609.20 C1067.12,609.20 1071.18,609.20 1079.30,609.20 C1087.42,609.20 1091.48,609.20 1099.60,609.20 C1107.72,609.20 1111.78,609.20 1119.90,609.20 C1128.02,609.20 1132.08,609.20 1140.20,609.20 C1148.32,609.20 1152.38,609.20 1160.50,609.20 C1168.62,609.20 1172.68,609.20 1180.80,609.20 C1188.92,609.20 1192.98,609.20 1201.10,609.20 C1209.22,609.20 1213.28,609.20 1221.40,609.20 C1229.52,609.20 1233.58,609.20 1241.70,609.20 C1249.82,609.20 1253.88,609.20 1262.00,609.20 C1270.12,609.20 1274.18,609.20 1282.30,609.20 C1290.42,609.20 1294.48,609.20 1302.60,609.20 C1310.72,609.20 1314.78,609.20 1322.90,609.20 C1331.02,609.20 1335.08,609.20 1343.20,609.20 C1351.32,609.20 1355.38,609.20 1363.50,609.20 C1371.62,609.20 1375.68,609.20 1383.80,609.20 C1391.92,609.20 1395.98,609.20 1404.10,609.20 C1412.22,609.20 1416.28,609.20 1424.40,609.20 C1432.52,609.20 1436.58,609.20 1444.70,609.20 C1452.82,609.20 1456.88,609.20 1465.00,609.20 C1473.12,609.20 1477.18,609.20 1485.30,609.20 L1485.30,609.20 L896.60,609.20 Z" fill="rgba(0,0,0,0.6)"/>
<path d="M896.60,609.20 C904.72,609.20 908.78,609.20 916.90,609.20 C925.02,609.20 929.08,609.20 937.20,609.20 C945.32,609.20 949.38,609.20 957.50,609.20 C965.62,609.20 969.68,609.20 977.80,609.20 C985.92,609.20 989.98,609.20 998.10,609.20 C1006.22,609.20 1010.28,609.20 1018.40,609.20 C1026.52,609.20 1030.58,609.20 1038.70,609.20 C1046.82,609.20 1050.88,609.20 1059.00,609.20 C1067.12,609.20 1071.18,609.20 1079.30,609.20 C1087.42,609.20 1091.48,609.20 1099.60,609.20 C1107.72,609.20 1118.55,609.20 1119.90,609.20 C1134.79,527.18 1132.08,385.60 1140.20,385.60 C1148.32,385.60 1145.61,527.18 1160.50,609.20 C1161.85,609.20 1172.68,609.20 1180.80,609.20 C1188.92,609.20 1192.98,609.20 1201.10,609.20 C1209.22,609.20 1213.28,609.20 1221.40,609.20 C1229.52,609.20 1233.58,609.20 1241.70,609.20 C1249.82,609.20 1253.88,609.20 1262.00,609.20 C1270.12,609.20 1280.95,609.20 1282.30,609.20 C1297.19,527.18 1294.48,385.60 1302.60,385.60 C1310.72,385.60 1308.01,527.18 1322.90,609.20 C1324.25,609.20 1335.08,609.20 1343.20,609.20 C1351.32,609.20 1355.38,609.20 1363.50,609.20 C1371.62,609.20 1375.68,609.20 1383.80,609.20 C1391.92,609.20 1395.98,609.20 1404.10,609.20 C1412.22,609.20 1416.28,609.20 1424.40,609.20 C1432.52,609.20 1436.58,609.20 1444.70,609.20 C1452.82,609.20 1463.65,609.20 1465.00,609.20 C1479.89,527.18 1477.18,475.04 1485.30,385.60 L1485.30,609.20 L896.60,609.20 Z" fill="rgba(0,0,0,0.12)"/>
<line x1="896.60" y1="609.20" x2="1485.30" y2="609.20" stroke="#c4c4c4" stroke-width="1.6"/>
<circle cx="896.60" cy="609.20" r="2.5" fill="#d7ecfb" stroke="#36a2eb" stroke-width="0.9" opacity="0.85"/>
<circle cx="916.90" cy="609.20" r="2.5" fill="#ffe0e6" stroke="#ff6384" stroke-width="0.9" opacity="0.85"/>
<circle cx="937.20" cy="609.20" r="2.5" fill="#fff5dd" stroke="#ffce56" stroke-width="0.9" opacity="0.85"/>
<circle cx="957.50" cy="609.20" r="2.5" fill="#dbf2f2" stroke="#4bc0c0" stroke-width="0.9" opacity="0.85"/>
<circle cx="977.80" cy="609.20" r="2.5" fill="#ebe0ff" stroke="#9966ff" stroke-width="0.9" opacity="0.85"/>
<circle cx="998.10" cy="609.20" r="2.5" fill="#ffecd9" stroke="#ff9f40" stroke-width="0.9" opacity="0.85"/>
<circle cx="1018.40" cy="609.20" r="2.5" fill="#dcdcdc" stroke="#c9cbcf" stroke-width="0.9" opacity="0.85"/>
<circle cx="1038.70" cy="609.20" r="2.5" fill="#dcdcdc" stroke="#c9cbcf" stroke-width="0.9" opacity="0.85"/>
<circle cx="1059.00" cy="609.20" r="2.5" fill="#dcdcdc" stroke="#c9cbcf" stroke-width="0.9" opacity="0.85"/>
<circle cx="1079.30" cy="609.20" r="2.5" fill="#dcdcdc" stroke="#c9cbcf" stroke-width="0.9" opacity="0.85"/>
<circle cx="1099.60" cy="609.20" r="2.5" fill="#dcdcdc" stroke="#c9cbcf" stroke-width="0.9" opacity="0.85"/>
<circle cx="1119.90" cy="609.20" r="2.5" fill="#dcdcdc" stroke="#c9cbcf" stroke-width="0.9" opacity="0.85"/>
<circle cx="1140.20" cy="609.20" r="2.5" fill="#dcdcdc" stroke="#c9cbcf" stroke-width="0.9" opacity="0.85"/>
<circle cx="1160.50" cy="609.20" r="2.5" fill="#dcdcdc" stroke="#c9cbcf" stroke-width="0.9" opacity="0.85"/>
<circle cx="1180.80" cy="609.20" r="2.5" fill="#dcdcdc" stroke="#c9cbcf" stroke-width="0.9" opacity="0.85"/>
<circle cx="1201.10" cy="609.20" r="2.5" fill="#dcdcdc" stroke="#c9cbcf" stroke-width="0.9" opacity="0.85"/>
<circle cx="1221.40" cy="609.20" r="2.5" fill="#dcdcdc" stroke="#c9cbcf" stroke-width="0.9" opacity="0.85"/>
<circle cx="1241.70" cy="609.20" r="2.5" fill="#dcdcdc" stroke="#c9cbcf" stroke-width="0.9" opacity="0.85"/>
<circle cx="1262.00" cy="609.20" r="2.5" fill="#dcdcdc" stroke="#c9cbcf" stroke-width="0.9" opacity="0.85"/>
<circle cx="1282.30" cy="609.20" r="2.5" fill="#dcdcdc" stroke="#c9cbcf" stroke-width="0.9" opacity="0.85"/>
<circle cx="1302.60" cy="609.20" r="2.5" fill="#dcdcdc" stroke="#c9cbcf" stroke-width="0.9" opacity="0.85"/>
<circle cx="1322.90" cy="609.20" r="2.5" fill="#dcdcdc" stroke="#c9cbcf" stroke-width="0.9" opacity="0.85"/>
<circle cx="1343.20" cy="609.20" r="2.5" fill="#dcdcdc" stroke="#c9cbcf" stroke-width="0.9" opacity="0.85"/>
<circle cx="1363.50" cy="609.20" r="2.5" fill="#dcdcdc" stroke="#c9cbcf" stroke-width="0.9" opacity="0.85"/>
<circle cx="1383.80" cy="609.20" r="2.5" fill="#dcdcdc" stroke="#c9cbcf" stroke-width="0.9" opacity="0.85"/>
<circle cx="1404.10" cy="609.20" r="2.5" fill="#dcdcdc" stroke="#c9cbcf" stroke-width="0.9" opacity="0.85"/>
<circle cx="1424.40" cy="609.20" r="2.5" fill="#dcdcdc" stroke="#c9cbcf" stroke-width="0.9" opacity="0.85"/>
<circle cx="1444.70" cy="609.20" r="2.5" fill="#dcdcdc" stroke="#c9cbcf" stroke-width="0.9" opacity="0.85"/>
<circle cx="1465.00" cy="609.20" r="2.5" fill="#dcdcdc" stroke="#c9cbcf" stroke-width="0.9" opacity="0.85"/>
<circle cx="1485.30" cy="609.20" r="2.5" fill="#dcdcdc" stroke="#c9cbcf" stroke-width="0.9" opacity="0.85"/>
<text transform="translate(899.10,619.20) rotate(-50)" text-anchor="end" font-size="9.8" fill="#555">11/6/2024</text>
<text transform="translate(960.00,619.20) rotate(-50)" text-anchor="end" font-size="9.8" fill="#555">11/9/2024</text>
<text transform="translate(1020.90,619.20) rotate(-50)" text-anchor="end" font-size="9.8" fill="#555">11/12/2024</text>
<text transform="translate(1081.80,619.20) rotate(-50)" text-anchor="end" font-size="9.8" fill="#555">11/15/2024</text>
<text transform="translate(1142.70,619.20) rotate(-50)" text-anchor="end" font-size="9.8" fill="#555">11/18/2024</text>
<text transform="translate(1203.60,619.20) rotate(-50)" text-anchor="end" font-size="9.8" fill="#555">11/21/2024</text>
<text transform="translate(1264.50,619.20) rotate(-50)" text-anchor="end" font-size="9.8" fill="#555">11/24/2024</text>
<text transform="translate(1325.40,619.20) rotate(-50)" text-anchor="end" font-size="9.8" fill="#555">11/27/2024</text>
<text transform="translate(1386.30,619.20) rotate(-50)" text-anchor="end" font-size="9.8" fill="#555">11/30/2024</text>
<text transform="translate(1447.20,619.20) rotate(-50)" text-anchor="end" font-size="9.8" fill="#555">12/3/2024</text>
</svg>
<div class="abs" style="left:1448px;top:784.5px;width:39px;height:39px;border-radius:50%;background:#2f7fe6;box-shadow:0 1px 6px rgba(0,0,0,.12)"></div>
<svg class="abs" style="left:1448px;top:784.5px" width="39" height="39" viewBox="0 0 39 39"><path d="M11.6,11.8 Q11.6,10.6 12.8,10.6 H26 Q27.4,10.6 27.4,11.8 V30 L24,27.6 H12.8 Q11.6,27.6 11.6,26.4 Z" fill="#fff"/><path d="M14.6,22.4 Q19.5,25.6 24.4,22.4" stroke="#444" stroke-width="1.1" fill="none" stroke-linecap="round"/></svg>
</body></html>
